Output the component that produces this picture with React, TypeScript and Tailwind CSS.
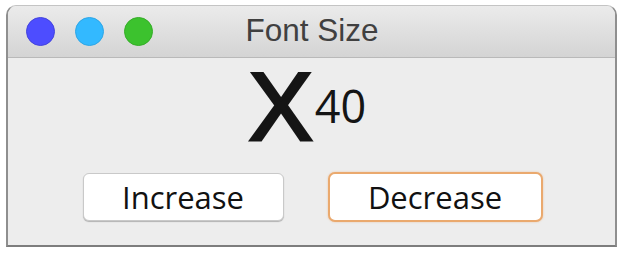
import { useState } from "react";

const LABEL_FONT = "font-['Open_Sans','DejaVu_Sans',sans-serif]";

export default function App() {
  const [size, setSize] = useState(40);

  return (
    <div className="w-[623px] h-[253px] bg-white pt-[5px] pl-[6px]">
      <div className="w-[611px] h-[242px] flex flex-col rounded-t-[10px] border-x-2 border-b-2 border-t border-x-[#8f8f8f] border-b-[#7d7d7d] border-t-[#c4c4c4] bg-[#ededed] overflow-hidden">
        {/* Title bar: traffic lights + centred title */}
        <div className="relative h-[52px] shrink-0 flex items-center pl-[18px] gap-[20px] bg-gradient-to-b from-[#ebebeb] to-[#d4d4d4] border-b border-[#b9b9b9]">
          <span className="w-[29px] h-[29px] rounded-full bg-[#4d4dff] border border-[#4343dd]" />
          <span className="w-[29px] h-[29px] rounded-full bg-[#33b9ff] border border-[#2ea6e6]" />
          <span className="w-[29px] h-[29px] rounded-full bg-[#3cc22e] border border-[#35ad28]" />
          <span className="absolute inset-0 flex items-center justify-center pl-[1px] pb-[1px] text-[31.5px] text-[#404040] font-['Liberation_Sans',Arial,sans-serif]">
            Font Size
          </span>
        </div>

        {/* Preview: big X with current size (stroke thickens the regular cut to a medium weight) */}
        <div className="flex items-center justify-center pt-[1px] pr-[8px]">
          <span className="text-[96px] leading-none text-[#151515] [-webkit-text-stroke:3px_#151515] font-['Liberation_Sans',Arial,sans-serif]">X</span>
          <span className={`ml-[2px] mb-[3px] text-[45px] leading-none text-[#151515] ${LABEL_FONT}`}>{size}</span>
        </div>

        {/* Buttons */}
        <div className="flex justify-center items-center gap-[44px] mt-[17px] pl-[2px]">
          <button
            onClick={() => setSize((s) => s + 2)}
            className={`w-[201px] h-[48px] rounded-[6px] bg-white border border-[#c9c9c9] shadow-[0_1px_1px_rgba(0,0,0,0.25)] text-[31px] leading-none text-[#111] ${LABEL_FONT}`}
          >
            Increase
          </button>
          <button
            onClick={() => setSize((s) => Math.max(2, s - 2))}
            className={`w-[215px] h-[50px] rounded-[7px] bg-white border-2 border-[#eaa96e] shadow-[0_0_2px_rgba(234,169,110,0.6)] text-[31px] leading-none text-[#111] ${LABEL_FONT}`}
          >
            Decrease
          </button>
        </div>
      </div>
    </div>
  );
}
